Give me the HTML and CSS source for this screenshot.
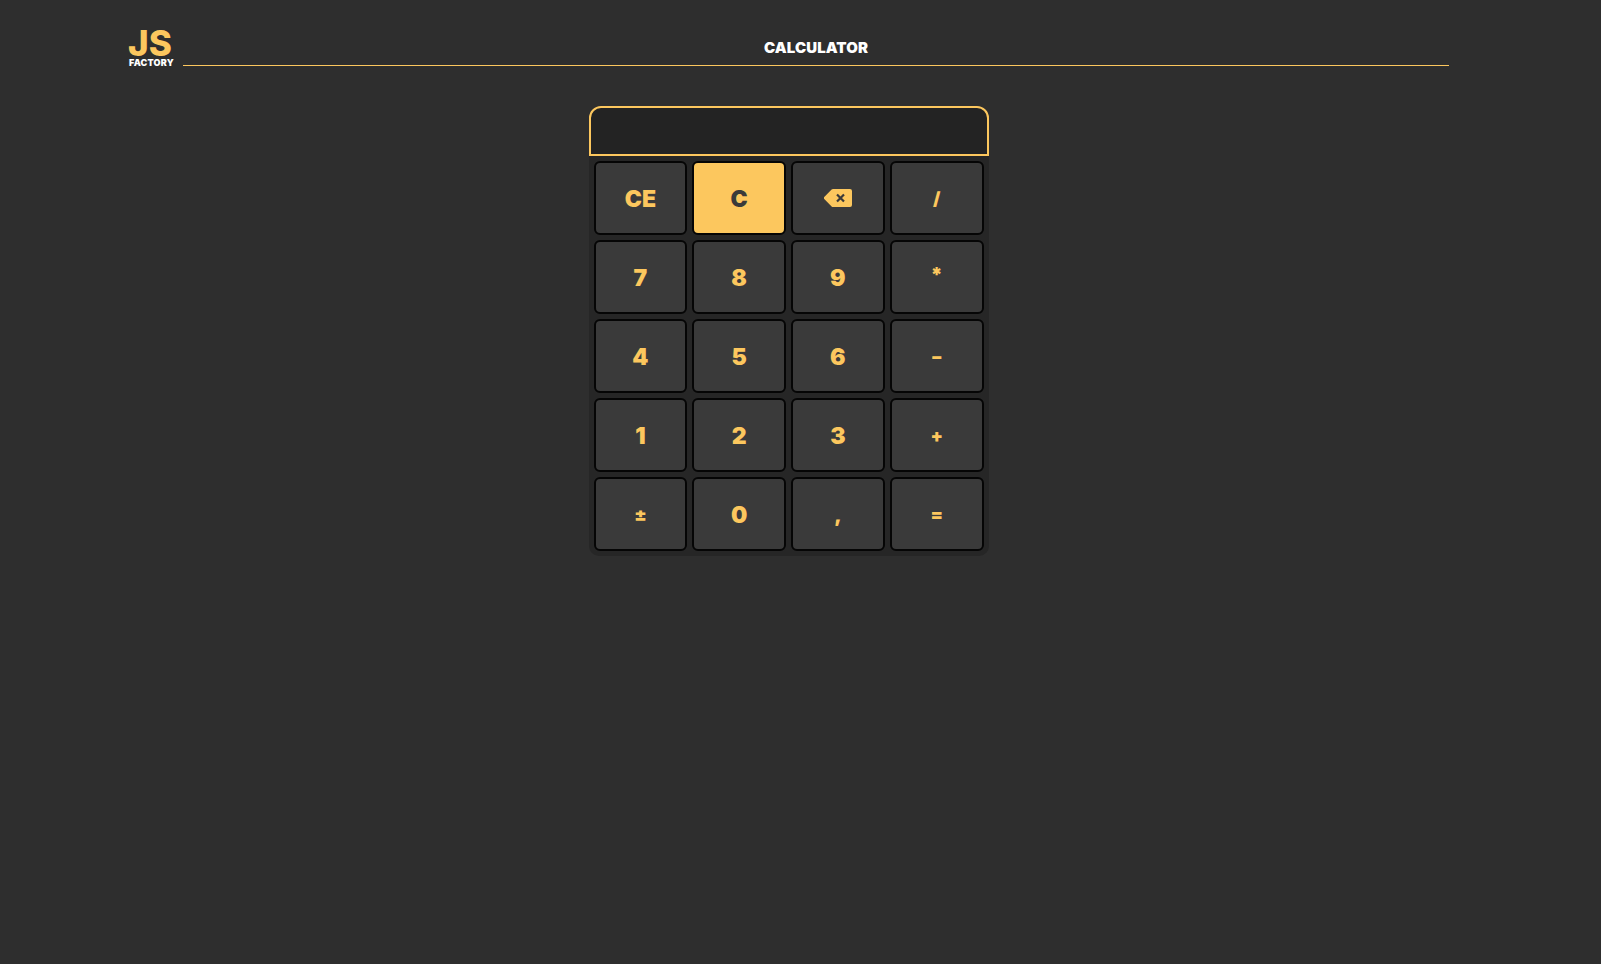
FILE: index.html
```html
<!DOCTYPE html>
<html lang="en">
<head>
<meta charset="utf-8">
<title>Calculator</title>
<link rel="stylesheet" href="styles.css">
</head>
<body>
<div class="page">
  <header class="header">
    <div class="logo">
      <span class="logo-js">JS</span>
      <span class="logo-sub">FACTORY</span>
    </div>
    <div class="title-wrap"><h1 class="title">CALCULATOR</h1></div>
  </header>
  <main class="calc">
    <div class="display"></div>
    <div class="keys">
      <button class="key">CE</button>
      <button class="key key-active">C</button>
      <button class="key key-op" aria-label="Backspace"><svg class="backspace" viewBox="0 0 28 18" width="28" height="18"><path fill-rule="evenodd" fill="#fcc75e" d="M9 0H26a2 2 0 0 1 2 2V16a2 2 0 0 1-2 2H9a2 2 0 0 1-1.4-.6L0.5 10.3a1.8 1.8 0 0 1 0-2.6L7.6 .6A2 2 0 0 1 9 0Z"/><path d="M13 5.5l7 7M20 5.5l-7 7" stroke="#3a3a3a" stroke-width="2.2" fill="none"/></svg></button>
      <button class="key key-op">/</button>
      <button class="key">7</button>
      <button class="key">8</button>
      <button class="key">9</button>
      <button class="key key-op key-star">*</button>
      <button class="key">4</button>
      <button class="key">5</button>
      <button class="key">6</button>
      <button class="key key-op">–</button>
      <button class="key">1</button>
      <button class="key">2</button>
      <button class="key">3</button>
      <button class="key key-op">+</button>
      <button class="key key-op">±</button>
      <button class="key">0</button>
      <button class="key key-op key-comma">,</button>
      <button class="key key-op">=</button>
    </div>
  </main>
</div>
</body>
</html>
```
FILE: styles.css
```css
* { box-sizing: border-box; }
html, body { margin: 0; height: 100%; }
body { background: #2e2e2e; font-family: Inter, "Liberation Sans", sans-serif; }
.page { width: 1321px; margin-left: 128px; padding-top: 29px; }
.header { display: flex; align-items: flex-end; gap: 11px; height: 37px; }
.logo { display: flex; flex-direction: column; width: 44px; height: 39px; margin-bottom: -2px; }
.logo-js { color: #fcc75e; font-size: 35px; font-weight: 800; line-height: 28px; letter-spacing: .2px; }
.logo-sub { color: #fff; font-size: 9px; font-weight: 900; line-height: 10px; white-space: nowrap; letter-spacing: .2px; padding: 1px 0 0 1px; }
.title-wrap { flex: 1; height: 36px; border-bottom: 1px solid #fcc75e; display: flex; justify-content: center; padding-top: 9px; }
.title { margin: 0; color: #fff; font-size: 15px; font-weight: 900; line-height: 18px; letter-spacing: .1px; }
.calc { width: 400px; margin: 40px auto 0; }
.display { height: 50px; background: #232323; border: 2px solid #fcc75e; border-radius: 12px 12px 0 0; }
.keys { background: #262626; border-radius: 0 0 10px 10px; padding: 5px; display: grid; grid-template-columns: repeat(4, 1fr); grid-auto-rows: 74px; gap: 5px; }
.key { background: #3a3a3a; border: 2px solid #050505; border-radius: 6px; color: #fcc75e; font-family: inherit; font-size: 23px; font-weight: 900; padding: 2px 0 0; display: flex; align-items: center; justify-content: center; }
.key-active { background: #fcc75e; color: #3a3a3a; }
.key-op { font-size: 18px; padding: 0; }
.key-star { padding-bottom: 4px; font-size: 20px; }
.key-comma { font-size: 20px; padding-top: 2px; }
.backspace { display: block; }
```
